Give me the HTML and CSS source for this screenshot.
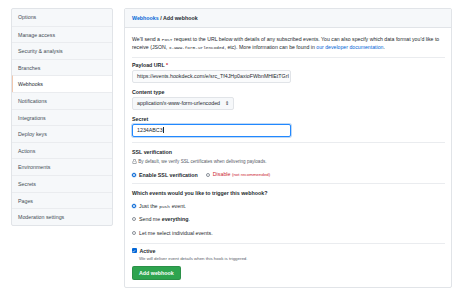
FILE: index.html
```html
<!DOCTYPE html>
<html lang="en">
<head>
    <meta charset="UTF-8">
    <title>Add webhook</title>
    <link rel="stylesheet" href="styles.css">
</head>
<body>
    <div class="page">
        <nav class="menu">
            <a class="menu-item">Options</a>
            <a class="menu-item">Manage access</a>
            <a class="menu-item">Security &amp; analysis</a>
            <a class="menu-item">Branches</a>
            <a class="menu-item selected">Webhooks</a>
            <a class="menu-item">Notifications</a>
            <a class="menu-item">Integrations</a>
            <a class="menu-item">Deploy keys</a>
            <a class="menu-item">Actions</a>
            <a class="menu-item">Environments</a>
            <a class="menu-item">Secrets</a>
            <a class="menu-item">Pages</a>
            <a class="menu-item">Moderation settings</a>
        </nav>

        <div class="box">
            <div class="box-header">
                <a class="link">Webhooks</a> / Add webhook
            </div>
            <div class="box-body">
                <p class="intro">
                    We'll send a <code>POST</code> request to the URL below with details of any subscribed events. You can also specify which data format you'd like to receive (JSON, <code>x-www-form-urlencoded</code>, <em>etc</em>). More information can be found in <a class="link">our developer documentation</a>.
                </p>

                <div class="section fields">
                    <label class="label">Payload URL <span class="req">*</span></label>
                    <div class="input">https://events.hookdeck.com/e/src_Tf4JHp0axioFWbnMHlEtTGrI</div>

                    <label class="label">Content type</label>
                    <div class="select">application/x-www-form-urlencoded <span class="arrows">&#8661;</span></div>

                    <label class="label">Secret</label>
                    <div class="input focused">1234ABC3<span class="caret"></span></div>
                </div>

                <div class="section ssl">
                    <div class="label">SSL verification</div>
                    <p class="note">
                        <svg class="lock" viewBox="0 0 16 16" width="5" height="5"><path fill="#586069" fill-rule="evenodd" d="M4 4v2h-.25A1.75 1.75 0 002 7.75v5.5c0 .97.78 1.75 1.75 1.75h8.5A1.75 1.75 0 0014 13.25v-5.5A1.75 1.75 0 0012.25 6H12V4a4 4 0 10-8 0zm6.5 2V4a2.5 2.5 0 00-5 0v2h5zM12 7.5h.25a.25.25 0 01.25.25v5.5a.25.25 0 01-.25.25h-8.5a.25.25 0 01-.25-.25v-5.5a.25.25 0 01.25-.25H12z"/></svg>
                        By default, we verify SSL certificates when delivering payloads.
                    </p>
                    <div class="radio-row">
                        <span class="option"><span class="radio checked"></span><strong>Enable SSL verification</strong></span>
                        <span class="option danger"><span class="radio"></span><span>Disable <small>(not recommended)</small></span></span>
                    </div>
                </div>

                <div class="section events">
                    <div class="label">Which events would you like to trigger this webhook?</div>
                    <div class="option stacked"><span class="radio checked"></span><span>Just the <code>push</code> event.</span></div>
                    <div class="option stacked"><span class="radio"></span><span>Send me <strong>everything</strong>.</span></div>
                    <div class="option stacked"><span class="radio"></span><span>Let me select individual events.</span></div>
                </div>

                <div class="section last">
                    <div class="option active"><span class="check"><svg viewBox="0 0 16 16" width="4" height="4"><path fill="#fff" d="M13.78 4.22a.75.75 0 010 1.06l-7.25 7.25a.75.75 0 01-1.06 0L2.22 9.28a.75.75 0 011.06-1.06L6 10.94l6.72-6.72a.75.75 0 011.06 0z"/></svg></span><strong>Active</strong></div>
                    <p class="hint">We will deliver event details when this hook is triggered.</p>
                    <button class="btn">Add webhook</button>
                </div>
            </div>
        </div>
    </div>
</body>
</html>
```

FILE: styles.css
```css
body {
    margin: 0;
    background-color: #fff;
    font-family: "Liberation Sans", Arial, sans-serif;
    font-size: 5.3px;
    line-height: 8px;
    color: #24292e;
}
.page {
    display: flex;
    align-items: flex-start;
    gap: 11px;
    padding: 8px 22px 6px 11px;
}

/* left menu */
.menu {
    width: 102px;
    flex-shrink: 0;
    display: flex;
    flex-direction: column;
    border: 1px solid #e1e4e8;
    border-radius: 2px;
    background-color: #f6f8fa;
    box-sizing: border-box;
}
.menu-item {
    display: block;
    height: 16.6px;
    line-height: 16.6px;
    padding-left: 6px;
    border-top: 1px solid #eaecef;
    box-sizing: border-box;
    color: #444d56;
}
.menu-item:first-child {
    border-top: 0;
}
.menu-item.selected {
    background-color: #fff;
    color: #24292e;
    border-left: 1px solid #f0c8b0;
    padding-left: 5px;
}

/* main box */
.box {
    flex: 1;
    border: 1px solid #e1e4e8;
    border-radius: 2px;
    background-color: #fff;
}
.box-header {
    height: 18px;
    line-height: 18px;
    padding: 0 7px;
    background-color: #f6f8fa;
    border-bottom: 1px solid #e1e4e8;
    font-weight: bold;
}
.link {
    color: #0366d6;
    font-weight: normal;
}
.box-header .link {
    font-weight: bold;
}
.box-body {
    padding: 7px 6px 7px 7px;
}
.intro {
    margin: 0;
    padding-bottom: 6px;
    border-bottom: 1px solid #eaecef;
    font-size: 5.2px;
}
code {
    font-family: "Liberation Mono", monospace;
    font-size: 4.4px;
    line-height: 6px;
    padding: 0 0.3px;
}
em {
    font-style: normal;
}

.section {
    display: flex;
    flex-direction: column;
    align-items: flex-start;
    border-bottom: 1px solid #eaecef;
}
.fields {
    padding: 3px 0 5px;
}
.ssl {
    padding: 4.5px 0 3px;
}
.events {
    padding: 5px 0 3px;
}
.events .label {
    margin-bottom: 2px;
}
.section.last {
    border-bottom: 0;
    padding: 3px 0 0;
}
.label {
    font-weight: bold;
    line-height: 8px;
    margin-bottom: 1px;
}
.req {
    color: #cb2431;
}
.input,
.select {
    height: 13px;
    line-height: 11px;
    padding: 0 4px;
    border: 1px solid #e1e4e8;
    border-radius: 2px;
    background-color: #fafbfc;
    box-sizing: border-box;
    margin-bottom: 5px;
    white-space: nowrap;
    overflow: hidden;
}
.input {
    width: 159px;
}
.input.focused {
    background-color: #fff;
    border-color: #2188ff;
    box-shadow: 0 0 0 1px rgba(3, 102, 214, 0.25);
    margin-bottom: 0;
}
.caret {
    display: inline-block;
    width: 0.5px;
    height: 6px;
    background-color: #24292e;
    vertical-align: -1px;
}
.select {
    display: flex;
    align-items: center;
    gap: 5px;
    background-color: #f6f8fa;
}
.arrows {
    font-size: 4.5px;
}

.note {
    margin: 1px 0 3.5px;
    color: #586069;
    font-size: 4.6px;
}
.lock {
    vertical-align: -1px;
}
.radio-row {
    display: flex;
    gap: 8px;
}
.option {
    display: flex;
    align-items: center;
    gap: 3px;
    height: 11px;
}
.option.stacked {
    height: 13.5px;
}
.option strong {
    font-weight: bold;
}
.danger {
    color: #cb2431;
}
.danger small {
    font-size: 4.4px;
}
.radio {
    width: 4px;
    height: 4px;
    border: 0.6px solid #8a9199;
    border-radius: 50%;
    background-color: #fff;
    box-sizing: border-box;
    flex-shrink: 0;
}
.radio.checked {
    border: 1.3px solid #0366d6;
    background-color: #fff;
    box-shadow: 0 0 0 0.5px #9fc5f0;
}
.check {
    width: 4.5px;
    height: 4.5px;
    border-radius: 1px;
    background-color: #0366d6;
    display: flex;
    align-items: center;
    justify-content: center;
}
.option.active {
    height: 8px;
}
.hint {
    margin: 0 0 4px 7px;
    color: #586069;
    font-size: 4.4px;
    line-height: 7px;
}
.btn {
    height: 14px;
    padding: 0 6px;
    background-color: #2ea44f;
    border: 1px solid rgba(27, 31, 35, 0.15);
    border-radius: 2px;
    color: #fff;
    font-family: inherit;
    font-size: 5.3px;
    font-weight: bold;
}
```
